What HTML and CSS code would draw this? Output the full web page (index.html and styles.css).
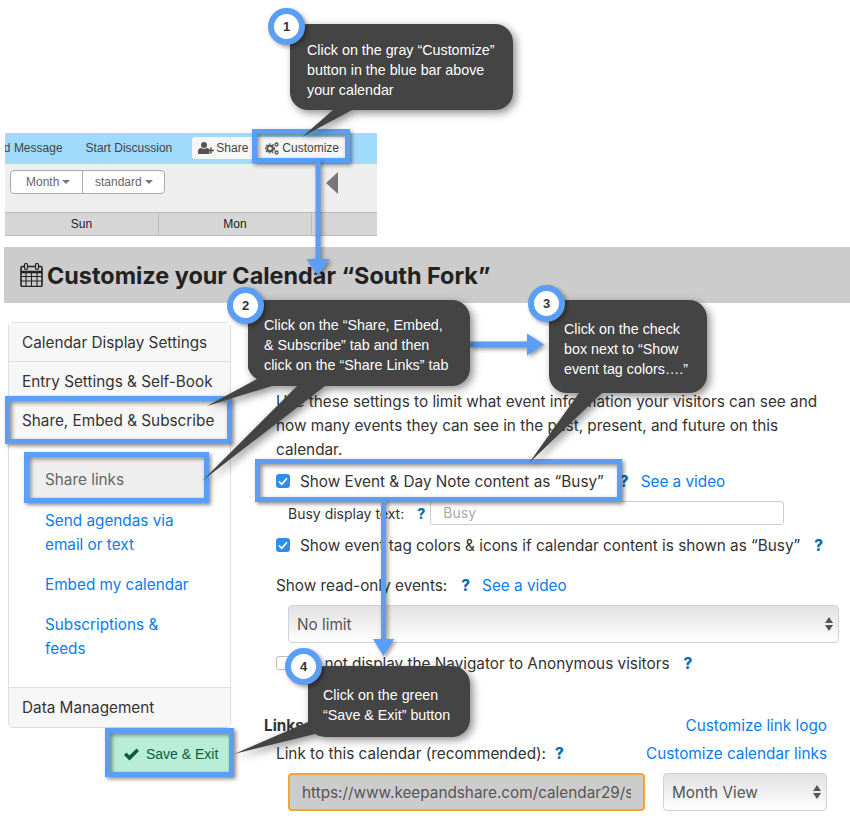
FILE: index.html
```html
<!DOCTYPE html>
<html lang="en">
<head>
    <meta charset="UTF-8">
    <meta name="viewport" content="width=device-width, initial-scale=1.0">
    <title>Customize your Calendar</title>
    <link rel="stylesheet" href="styles.css">
</head>
<body>
    <div class="page">
        <!-- calendar snippet -->
        <div class="cal-snippet">
            <div class="cal-bar">
                <span class="cal-bar-link cal-send">Send Message</span>
                <span class="cal-bar-link">Start Discussion</span>
                <span class="cal-bar-btn cal-share">
                    <svg width="16" height="12" viewBox="0 0 16 12"><circle cx="6" cy="3" r="3" fill="#555"/><path d="M0 12V9c0-2 2-3 3-3l3 1 3-1c1 0 2 .6 2.500 1.500V12z" fill="#555"/><path d="M10 8.500h6M13 5.500v6" stroke="#555" stroke-width="1.600"/></svg>
                    Share
                </span>
                <span class="cal-bar-btn cal-customize">
                    <svg width="14" height="13" viewBox="0 0 14 13"><circle cx="5" cy="6.500" r="2.800" fill="none" stroke="#555" stroke-width="2"/><circle cx="5" cy="6.500" r="4.400" fill="none" stroke="#555" stroke-width="1.400" stroke-dasharray="1.700 1.500"/><circle cx="11.500" cy="2.500" r="1.500" fill="none" stroke="#555" stroke-width="1.300"/><circle cx="11.500" cy="10.500" r="1.500" fill="none" stroke="#555" stroke-width="1.300"/></svg>
                    Customize
                </span>
            </div>
            <div class="cal-toolbar">
                <div class="btn-group">
                    <span class="group-btn group-month">Month<i class="caret"></i></span>
                    <span class="group-btn group-standard">standard<i class="caret"></i></span>
                </div>
                <svg class="collapse-arrow" width="12" height="22" viewBox="0 0 12 22"><path d="M12 0v22L0 11z" fill="#777"/></svg>
            </div>
            <div class="cal-days">
                <span class="cal-day">Sun</span>
                <span class="cal-day">Mon</span>
            </div>
        </div>

        <h1 class="page-title">
            <svg width="23" height="24" viewBox="0 0 23 24"><path d="M2.500 3.500h18a1.500 1.500 0 0 1 1.500 1.500v17a1.500 1.500 0 0 1-1.500 1.500h-18A1.500 1.500 0 0 1 1 22V5a1.500 1.500 0 0 1 1.500-1.500z" fill="none" stroke="#222" stroke-width="1.600"/><path d="M1 9h21" stroke="#222" stroke-width="2.600"/><path d="M1 13.500h21M1 18h21M6 9v14M11.500 9v14M17 9v14" stroke="#222" stroke-width="1.100"/><rect x="4.500" y="0.500" width="3" height="6" rx="1.400" fill="#ccc" stroke="#222" stroke-width="1.200"/><rect x="15.500" y="0.500" width="3" height="6" rx="1.400" fill="#ccc" stroke="#222" stroke-width="1.200"/></svg>
            Customize your Calendar “South Fork”
        </h1>

        <div class="settings">
            <div class="sidebar">
                <div class="side-head">Calendar Display Settings</div>
                <div class="side-head">Entry Settings &amp; Self-Book</div>
                <div class="side-head side-open">Share, Embed &amp; Subscribe</div>
                <div class="side-panel">
                    <div class="side-current">Share links</div>
                    <a class="side-link">Send agendas via email or text</a>
                    <a class="side-link">Embed my calendar</a>
                    <a class="side-link">Subscriptions &amp; feeds</a>
                </div>
                <div class="side-head side-last">Data Management</div>
            </div>

            <div class="main">
                <p class="intro">Use these settings to limit what event information your visitors can see and how many events they can see in the past, present, and future on this calendar.</p>
                <div class="row">
                    <span class="check"><svg width="14" height="14" viewBox="0 0 14 14"><path d="M3 7.500l2.800 2.800L11 4.200" fill="none" stroke="#fff" stroke-width="1.700"/></svg></span>
                    <span>Show Event &amp; Day Note content as “Busy”</span>
                    <b class="help help-event">?</b>
                    <a class="video-link">See a video</a>
                </div>
                <div class="busy-row">
                    <label class="busy-label">Busy display text:</label>
                    <b class="help">?</b>
                    <input class="busy-input" type="text" placeholder="Busy">
                </div>
                <div class="row">
                    <span class="check"><svg width="14" height="14" viewBox="0 0 14 14"><path d="M3 7.500l2.800 2.800L11 4.200" fill="none" stroke="#fff" stroke-width="1.700"/></svg></span>
                    <span>Show event tag colors &amp; icons if calendar content is shown as “Busy”</span>
                    <b class="help">?</b>
                </div>
                <div class="row row-readonly">
                    <span>Show read-only events:</span>
                    <b class="help">?</b>
                    <a class="video-link">See a video</a>
                </div>
                <div class="fake-select select-wide">
                    <span>No limit</span>
                    <svg width="8" height="14" viewBox="0 0 8 14"><path d="M4 0l4 6H0zM4 14L0 8h8z" fill="#555"/></svg>
                </div>
                <div class="row row-nav">
                    <span class="check check-off"></span>
                    <span>Do not display the Navigator to Anonymous visitors</span>
                    <b class="help">?</b>
                </div>
                <div class="links-head">
                    <strong>Links</strong>
                    <a>Customize link logo</a>
                </div>
                <div class="links-label">
                    <span>Link to this calendar (recommended):<b class="help help-rec">?</b></span>
                    <a>Customize calendar links</a>
                </div>
                <div class="link-fields">
                    <input class="link-url" type="text" readonly value="https://www.keepandshare.com/calendar29/share.php?i=south-fork">
                    <div class="fake-select select-view">
                        <span>Month View</span>
                        <svg width="8" height="14" viewBox="0 0 8 14"><path d="M4 0l4 6H0zM4 14L0 8h8z" fill="#555"/></svg>
                    </div>
                </div>
            </div>
        </div>

        <!-- save button sits under the sidebar in the original -->
        <button class="save-btn">
            <svg width="17" height="13" viewBox="0 0 17 13"><path d="M1 7l2.500-2.500L6.500 7.500 13.500.500 16 3 6.500 12.500z" fill="#0c5c3c"/></svg>
            Save &amp; Exit
        </button>

        <!-- annotation layer -->
        <span class="hl hl-customize"></span>
        <span class="hl hl-share"></span>
        <span class="hl hl-links"></span>
        <span class="hl hl-event"></span>
        <span class="hl hl-save"></span>

        <svg class="overlay" width="850" height="822" viewBox="0 0 850 822">
            <g class="arrows">
                <path d="M315.500 160h5v99h9l-11.500 17-11.500-17h9z"/>
                <path d="M470 341.500h57v-8l17 11-17 11v-8h-57z"/>
                <path d="M381 500h5v139h8l-10.500 17-10.500-17h8z"/>
            </g>
            <g class="bubbles">
                <path d="M308 24h187a18 18 0 0 1 18 18v50a18 18 0 0 1-18 18H352l-50 27 31-27h-25a18 18 0 0 1-18-18V42a18 18 0 0 1 18-18z"/>
                <path d="M266 300h186a18 18 0 0 1 18 18v50a18 18 0 0 1-18 18H325L202 481l95-95h-25l-65 20 50-27a18 18 0 0 1-9-11V318a18 18 0 0 1 18-18z"/>
                <path d="M567 300h122a18 18 0 0 1 18 18v57a18 18 0 0 1-18 18h-87l-73 70 50-70h-12a18 18 0 0 1-18-18v-57a18 18 0 0 1 18-18z"/>
                <path d="M326 666h126a18 18 0 0 1 18 18v35a18 18 0 0 1-18 18H326a18 18 0 0 1-11-3l-81 20 74-32v-38a18 18 0 0 1 18-18z"/>
            </g>
        </svg>

        <div class="tip tip-1">Click on the gray “Customize”<br>button in the blue bar above<br>your calendar</div>
        <div class="tip tip-2">Click on the “Share, Embed,<br>&amp; Subscribe” tab and then<br>click on the “Share Links” tab</div>
        <div class="tip tip-3">Click on the check<br>box next to “Show<br>event tag colors….”</div>
        <div class="tip tip-4">Click on the green<br>“Save &amp; Exit” button</div>

        <span class="badge badge-1">1</span>
        <span class="badge badge-2">2</span>
        <span class="badge badge-3">3</span>
        <span class="badge badge-4">4</span>
    </div>
</body>
</html>
```

FILE: styles.css
```css
* {
    box-sizing: border-box;
}

body {
    margin: 0;
    background-color: white;
    font-family: Inter, "Liberation Sans", sans-serif;
    font-size: 15.3px;
    color: #333;
}

.page {
    position: relative;
    width: 850px;
    height: 822px;
    overflow: hidden;
    padding-top: 133px;
}

a {
    color: #0a7cf0;
}

/* calendar snippet */
.cal-snippet {
    width: 372px;
    height: 103px;
    margin-left: 5px;
    font-family: "Liberation Sans", Arial, sans-serif;
    font-size: 12px;
}

.cal-bar {
    display: flex;
    align-items: center;
    justify-content: flex-end;
    height: 30px;
    padding-right: 32px;
    background-color: #a0dbfd;
    overflow: hidden;
    white-space: nowrap;
    color: #444;
}

.cal-bar-link {
    margin-right: 20px;
    flex-shrink: 0;
}

.cal-send {
    margin-right: 23px;
}

.cal-bar-btn {
    display: flex;
    align-items: center;
    gap: 2px;
    height: 22px;
    padding: 0 6px;
    background-color: #f6f6f6;
    flex-shrink: 0;
}

.cal-share {
    padding-right: 5px;
    border-radius: 3px 0 0 3px;
}

.cal-customize {
    gap: 3px;
    padding-left: 12px;
}

.cal-toolbar {
    display: flex;
    align-items: flex-start;
    justify-content: space-between;
    height: 49px;
    padding: 6px 39px 0 5px;
    background-color: #eee;
    border-top: 1px solid #ccc;
}

.btn-group {
    display: flex;
    height: 24px;
    background-color: white;
    border: 1px solid #aaa;
    border-radius: 4px;
    color: #666;
}

.group-btn {
    display: flex;
    align-items: center;
    padding: 0 8px 0 11px;
}

.group-month {
    width: 72px;
    padding-left: 15px;
    border-right: 1px solid #aaa;
}

.group-standard {
    width: 81px;
    padding-left: 12px;
}

.caret {
    margin-left: 3px;
    border-top: 4px solid #777;
    border-left: 4px solid transparent;
    border-right: 4px solid transparent;
}

.collapse-arrow {
    margin-top: 2px;
}

.cal-days {
    display: flex;
    height: 24px;
    background-color: #d6d6d6;
    border-top: 1px solid #bbb;
    border-bottom: 1px solid #bbb;
    color: #222;
}

.cal-day {
    width: 153px;
    line-height: 22px;
    text-align: center;
    border-right: 1px solid #bbb;
}

.cal-day:first-child {
    width: 154px;
}

/* title */
.page-title {
    display: flex;
    align-items: center;
    gap: 4px;
    height: 56px;
    margin: 11px 0 0 4px;
    padding-left: 16px;
    background-color: #ccc;
    font-size: 23.4px;
    font-weight: bold;
    color: #222;
}

/* settings */
.settings {
    display: flex;
    align-items: flex-start;
    margin-top: 19px;
    padding-left: 8px;
}

.sidebar {
    flex-shrink: 0;
    width: 223px;
    border: 1px solid #ddd;
    border-radius: 5px;
    line-height: 24px;
}

.side-head {
    height: 39px;
    padding: 8px 13px 0;
    background-color: #f7f7f7;
    border-bottom: 1px solid #ddd;
    white-space: nowrap;
}

.side-last {
    height: 40px;
    border-bottom: none;
    border-top: 1px solid #ddd;
}

.side-open {
    border-bottom: none;
}

.side-panel {
    height: 247px;
    padding: 18px 26px 0 20px;
}

.side-current {
    height: 40px;
    padding: 10px 16px 0;
    margin-bottom: 11px;
    background-color: #eee;
    color: #666;
}

.side-link {
    display: block;
    padding: 0 14px 0 16px;
    margin-bottom: 16px;
}

.main {
    width: 563px;
    margin-left: 45px;
    padding-top: 68px;
}

.intro {
    margin: 0 0 7px;
    line-height: 24px;
}

.row {
    display: flex;
    align-items: center;
    height: 24px;
    margin-bottom: 8px;
    white-space: nowrap;
}

.check {
    display: flex;
    width: 14px;
    height: 14px;
    margin-right: 10px;
    background-color: #2e8ee8;
    border-radius: 3px;
}

.check-off {
    background-color: white;
    border: 1px solid #bbb;
}

.help {
    color: #0a6cb0;
    font-weight: 800;
    margin-left: 14px;
}

.help-event {
    margin-left: 16px;
}

.help-rec {
    margin-left: 9px;
}

.video-link {
    margin-left: 12px;
}

.busy-row {
    display: flex;
    align-items: center;
    height: 24px;
    margin-bottom: 8px;
    padding-left: 12px;
    font-size: 14px;
}

.busy-label {
    white-space: nowrap;
}

.busy-row .help {
    margin-left: 13px;
}

.busy-input {
    width: 354px;
    height: 24px;
    margin-left: 5px;
    padding: 0 12px 1px;
    border: 1px solid #ccc;
    border-radius: 3px;
    font: inherit;
}

.busy-input::placeholder {
    color: #aaa;
}

.row-readonly {
    margin-top: 16px;
    margin-bottom: 8px;
}

.fake-select {
    display: flex;
    align-items: center;
    justify-content: space-between;
    height: 38px;
    padding: 0 5px 0 8px;
    background: linear-gradient(#e2e2e2, #f2f2f2 60%, white);
    border: 1px solid #cdd3d8;
    border-radius: 4px;
    color: #555;
}

.select-wide {
    margin: 0 0 8px 12px;
}

.row-nav {
    margin-bottom: 38px;
}

.links-head,
.links-label {
    display: flex;
    align-items: center;
    justify-content: space-between;
    height: 24px;
    padding-right: 12px;
    white-space: nowrap;
}

.links-head {
    margin-left: -12px;
    margin-bottom: 4px;
}

.links-label {
    margin-bottom: 8px;
}

.link-fields {
    display: flex;
    gap: 18px;
    margin-left: 12px;
    padding-right: 12px;
}

.link-url {
    width: 357px;
    height: 38px;
    padding: 0 12px;
    background-color: #ccc;
    border: 2px solid #f5a42f;
    border-radius: 4px;
    font: inherit;
    color: #555;
}

.select-view {
    width: 164px;
}

.save-btn {
    position: absolute;
    left: 110px;
    top: 733px;
    display: flex;
    align-items: center;
    gap: 6px;
    width: 120px;
    height: 40px;
    padding: 2px 0 0 13px;
    background-color: #b8eed7;
    border: none;
    font-family: "Liberation Sans", Arial, sans-serif;
    font-size: 14px;
    color: #0c5c3c;
}

/* annotations */
.hl {
    position: absolute;
    border: 5px solid #5b9ef5;
    box-shadow: 2px 2px 4px rgba(0, 0, 0, 0.45), inset 2px 2px 4px rgba(0, 0, 0, 0.45);
}

.hl-customize {
    left: 252px;
    top: 129px;
    width: 98px;
    height: 34px;
}

.hl-share {
    left: 5px;
    top: 396px;
    width: 227px;
    height: 48px;
}

.hl-links {
    left: 24px;
    top: 452px;
    width: 185px;
    height: 51px;
}

.hl-event {
    left: 255px;
    top: 459px;
    width: 367px;
    height: 43px;
}

.hl-save {
    left: 105px;
    top: 728px;
    width: 129px;
    height: 49px;
}

.overlay {
    position: absolute;
    left: 0;
    top: 0;
}

.arrows {
    fill: #5b9ef5;
    filter: drop-shadow(2px 2px 2px rgba(0, 0, 0, 0.4));
}

.bubbles {
    fill: #444;
    filter: drop-shadow(3px 3px 4px rgba(0, 0, 0, 0.45));
}

.tip {
    position: absolute;
    font-family: "Liberation Sans", Arial, sans-serif;
    font-size: 14.3px;
    line-height: 20px;
    color: white;
    white-space: nowrap;
}

.tip-1 {
    left: 307px;
    top: 40px;
}

.tip-2 {
    left: 264px;
    top: 315px;
}

.tip-3 {
    left: 564px;
    top: 319px;
}

.tip-4 {
    left: 323px;
    top: 685px;
}

.badge {
    position: absolute;
    width: 37px;
    height: 37px;
    background-color: white;
    border: 6px solid #5b9ef5;
    border-radius: 50%;
    box-shadow: 2px 2px 4px rgba(0, 0, 0, 0.4);
    font-family: "Liberation Sans", Arial, sans-serif;
    font-size: 13px;
    font-weight: bold;
    line-height: 25px;
    text-align: center;
    color: #333;
}

.badge-1 {
    left: 268px;
    top: 8px;
}

.badge-2 {
    left: 227px;
    top: 287px;
}

.badge-3 {
    left: 528px;
    top: 285px;
}

.badge-4 {
    left: 285px;
    top: 648px;
}
```
